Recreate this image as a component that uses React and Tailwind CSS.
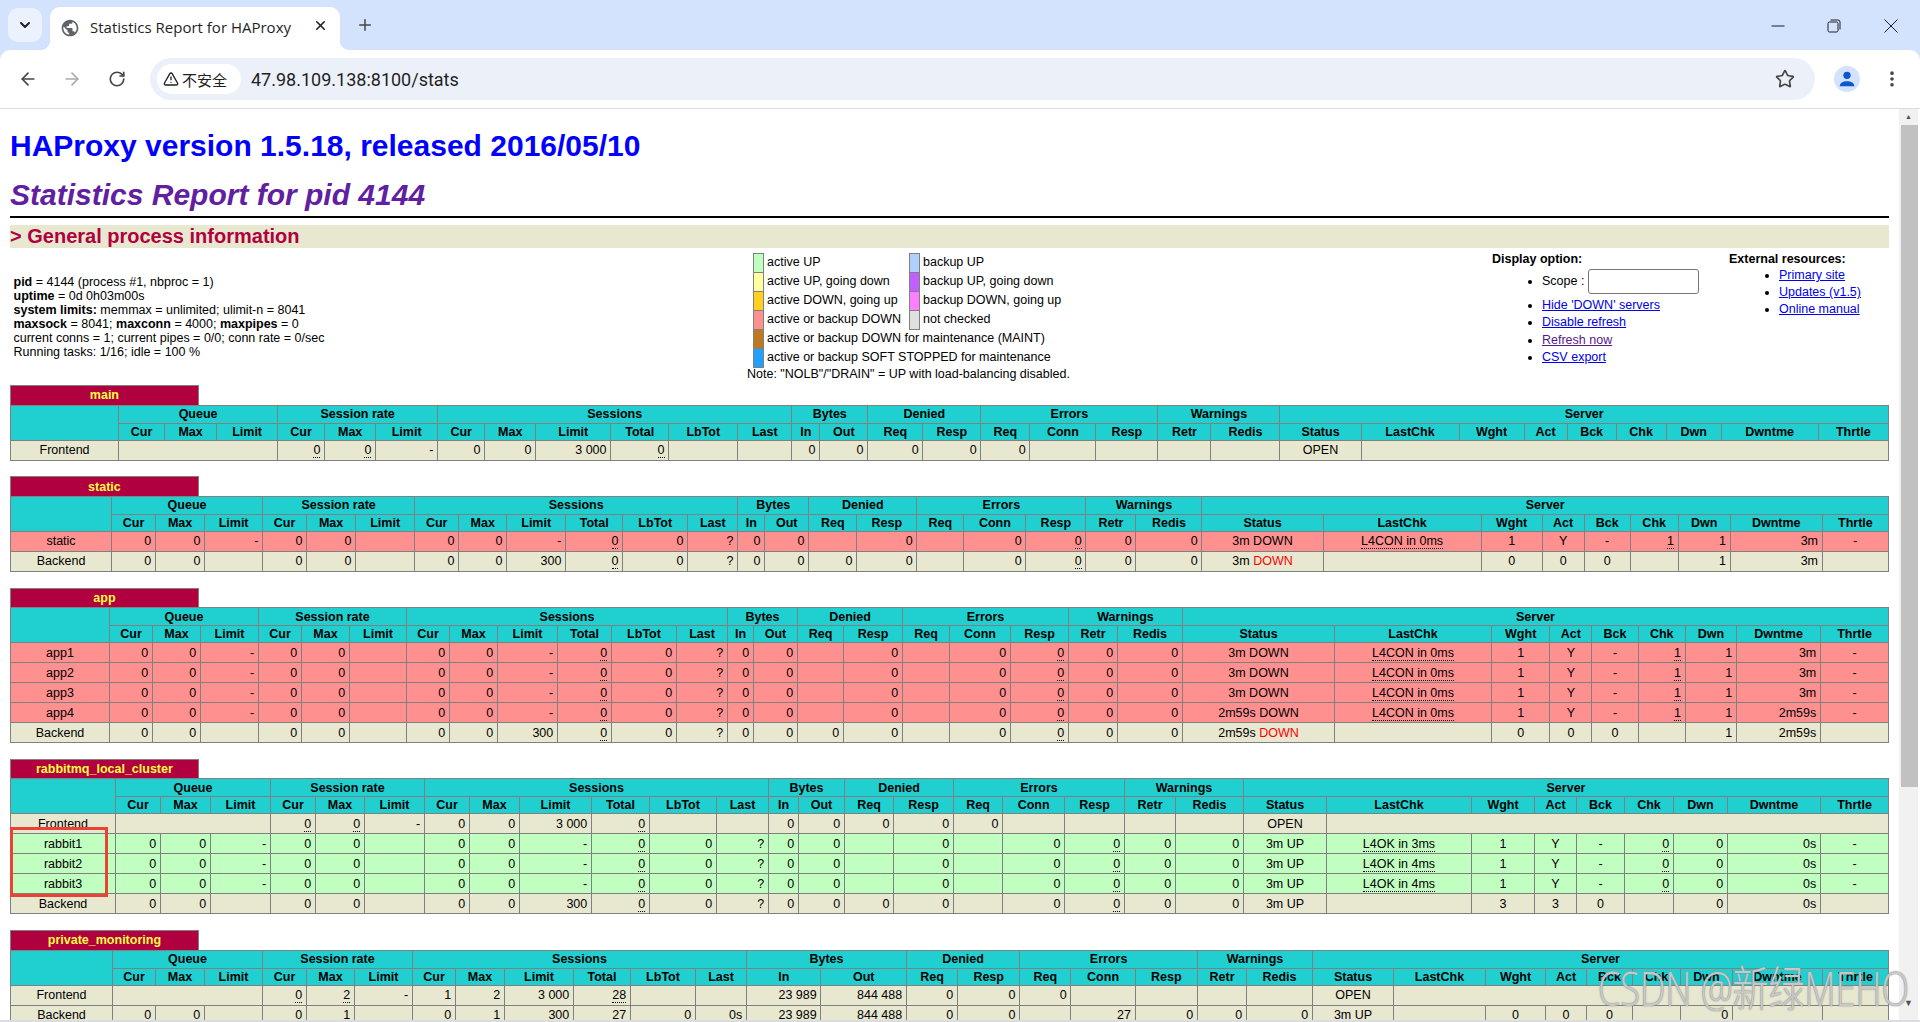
import { ArrowLeft, ArrowRight, ChevronDown, EllipsisVertical, Plus, RotateCw, Star, TriangleAlert, X } from "lucide-react";

const BASE_FONT = "font-['Liberation_Sans',Arial,sans-serif]";
const TD = "border border-[#808080] px-[3.75px] py-[2.5px] text-right whitespace-nowrap";
const TH = "border border-[#808080] font-bold text-center whitespace-nowrap px-[3.75px]";

// small helpers for the cell data
const u = (v) => ({ u: v });
const c = (v) => ({ c: v });
const cu = (v) => ({ cu: v });
const span = (n) => ({ span: n });
const rls = (a, b) => ({ a, b });

function Cell({ cell }) {
  if (cell === "" || cell == null) return <td className={TD}></td>;
  if (typeof cell === "string") return <td className={TD}>{cell}</td>;
  if (cell.span) return <td colSpan={cell.span} className={TD}></td>;
  if (cell.u) return <td className={TD}><span className="border-b border-dotted border-black">{cell.u}</span></td>;
  if (cell.cu) return <td className={`${TD} !text-center`}><span className="border-b border-dotted border-black">{cell.cu}</span></td>;
  if (cell.c) return <td className={`${TD} !text-center`}>{cell.c}</td>;
  if (cell.a) return <td className={TD}>{cell.a.slice(0, -1)}<span className="tracking-[0.2em] mr-px">{cell.a.slice(-1)}</span>{cell.b}</td>;
  if (cell.down) return <td className={`${TD} !text-center`}>{cell.down} <span className="text-[#ff0000]">DOWN</span></td>;
  return <td className={TD}></td>;
}

function ProxyTable({ name, rows, first, cols, last }) {
  const groups = [["Queue", 3], ["Session rate", 3], ["Sessions", 6], ["Bytes", 2], ["Denied", 2], ["Errors", 3], ["Warnings", 2], ["Server", 9]];
  const heads = ["Cur", "Max", "Limit", "Cur", "Max", "Limit", "Cur", "Max", "Limit", "Total", "LbTot", "Last", "In", "Out", "Req", "Resp", "Req", "Conn", "Resp", "Retr", "Redis", "Status", "LastChk", "Wght", "Act", "Bck", "Chk", "Dwn", "Dwntme", "Thrtle"];
  return (
    <div className={last ? "" : "mb-[15.75px]"}>
      <table className="w-full border-collapse">
        <tbody>
          <tr>
            <th className="w-[10%] h-[19px] border border-b-0 border-[#808080] bg-[#b00040] text-[#ffff40] font-bold">{name}</th>
            <th className="w-[90%]"></th>
          </tr>
        </tbody>
      </table>
      <table className="w-full border-collapse">
        <tbody>
          <tr className="bg-[#20d0d0]">
            <th rowSpan={2} className={`${TH} ${first}`}></th>
            {groups.map(([g, n]) => (
              <th key={g} colSpan={n} className={`${TH} h-[18px]`}>{g}</th>
            ))}
          </tr>
          <tr className="bg-[#20d0d0]">
            {heads.map((h, i) => (
              <th key={i} className={`${TH} h-[17px] ${cols[i]}`}>{h}</th>
            ))}
          </tr>
          {rows.map((r) => (
            <tr key={r.name} className={r.bg}>
              <td className={`${TD} !text-center`}>{r.name}</td>
              {r.cells.map((cell, i) => (
                <Cell key={i} cell={cell} />
              ))}
            </tr>
          ))}
        </tbody>
      </table>
    </div>
  );
}

const FE = "bg-[#e8e8d0]";
const DOWN = "bg-[#ff9090]";
const UP = "bg-[#c0ffc0]";

const frontend = (a, b, d, e, t) => ({
  name: "Frontend",
  bg: FE,
  cells: [span(3), a, b, "-", d, e, rls("3", "000"), t, "", "", "0", "0", "0", "0", "0", "", "", "", "", c("OPEN"), span(8)],
});

const downServer = (name, time, chk) => ({
  name,
  bg: DOWN,
  cells: ["0", "0", "-", "0", "0", "", "0", "0", "-", u("0"), "0", "?", "0", "0", "", "0", "", "0", u("0"), "0", "0", c(`${time} DOWN`), cu(chk), c("1"), c("Y"), c("-"), u("1"), "1", time, c("-")],
});

const downBackend = (time) => ({
  name: "Backend",
  bg: FE,
  cells: ["0", "0", "", "0", "0", "", "0", "0", "300", u("0"), "0", "?", "0", "0", "0", "0", "", "0", u("0"), "0", "0", { down: time }, "", c("0"), c("0"), c("0"), "", "1", time, ""],
});

const upServer = (name, chk) => ({
  name,
  bg: UP,
  cells: ["0", "0", "-", "0", "0", "", "0", "0", "-", u("0"), "0", "?", "0", "0", "", "0", "", "0", u("0"), "0", "0", c("3m UP"), cu(chk), c("1"), c("Y"), c("-"), u("0"), "0", "0s", c("-")],
});

const sections = [
  {
    name: "main",
    first: "w-[108px]",
    cols: ["w-[46px]", "w-[52px]", "w-[61px]", "w-[47px]", "w-[51px]", "w-[62px]", "w-[47px]", "w-[51px]", "w-[75px]", "w-[58px]", "w-[69px]", "w-[54px]", "w-[28px]", "w-[48px]", "w-[55px]", "w-[58px]", "w-[49px]", "w-[66px]", "w-[62px]", "w-[53px]", "w-[69px]", "w-[81px]", "w-[98px]", "w-[65px]", "w-[43px]", "w-[49px]", "w-[50px]", "w-[55px]", "w-[97px]", "w-[70px]"],
    rows: [frontend(u("0"), u("0"), "0", "0", u("0"))],
  },
  {
    name: "static",
    first: "w-[101px]",
    cols: ["w-[44px]", "w-[49px]", "w-[58px]", "w-[44px]", "w-[49px]", "w-[59px]", "w-[44px]", "w-[48px]", "w-[59px]", "w-[57px]", "w-[65px]", "w-[50px]", "w-[27px]", "w-[44px]", "w-[48px]", "w-[60px]", "w-[47px]", "w-[62px]", "w-[60px]", "w-[50px]", "w-[66px]", "w-[121px]", "w-[158px]", "w-[61px]", "w-[42px]", "w-[46px]", "w-[48px]", "w-[52px]", "w-[92px]", "w-[66px]"],
    rows: [downServer("static", "3m", "L4CON in 0ms"), downBackend("3m")],
  },
  {
    name: "app",
    first: "w-[99px]",
    cols: ["w-[43px]", "w-[48px]", "w-[58px]", "w-[43px]", "w-[48px]", "w-[57px]", "w-[43px]", "w-[48px]", "w-[60px]", "w-[54px]", "w-[65px]", "w-[51px]", "w-[26px]", "w-[44px]", "w-[46px]", "w-[59px]", "w-[47px]", "w-[61px]", "w-[58px]", "w-[49px]", "w-[65px]", "w-[152px]", "w-[157px]", "", "", "", "", "", "", "w-[68px]"],
    rows: [
      downServer("app1", "3m", "L4CON in 0ms"),
      downServer("app2", "3m", "L4CON in 0ms"),
      downServer("app3", "3m", "L4CON in 0ms"),
      downServer("app4", "2m59s", "L4CON in 0ms"),
      downBackend("2m59s"),
    ],
  },
  {
    name: "rabbitmq_local_cluster",
    first: "w-[105px]",
    cols: ["w-[45px]", "w-[50px]", "w-[60px]", "w-[45px]", "w-[49px]", "w-[60px]", "w-[45px]", "w-[50px]", "w-[72px]", "w-[58px]", "w-[67px]", "w-[52px]", "", "", "", "", "", "", "", "w-[51px]", "w-[68px]", "w-[83px]", "w-[145px]", "w-[63px]", "w-[42px]", "w-[48px]", "w-[49px]", "w-[54px]", "w-[93px]", "w-[68px]"],
    rows: [
      frontend(u("0"), u("0"), "0", "0", u("0")),
      upServer("rabbit1", "L4OK in 3ms"),
      upServer("rabbit2", "L4OK in 4ms"),
      upServer("rabbit3", "L4OK in 4ms"),
      {
        name: "Backend",
        bg: FE,
        cells: ["0", "0", "", "0", "0", "", "0", "0", "300", u("0"), "0", "?", "0", "0", "0", "0", "", "0", u("0"), "0", "0", c("3m UP"), "", c("3"), c("3"), c("0"), "", "0", "0s", ""],
      },
    ],
  },
  {
    name: "private_monitoring",
    first: "w-[102px]",
    cols: ["w-[43px]", "w-[49px]", "w-[58px]", "w-[44px]", "w-[48px]", "w-[58px]", "w-[43px]", "w-[49px]", "w-[69px]", "w-[57px]", "w-[65px]", "w-[51px]", "", "", "", "", "", "", "", "w-[49px]", "w-[66px]", "w-[81px]", "w-[92px]", "w-[60px]", "w-[41px]", "w-[46px]", "w-[48px]", "w-[52px]", "w-[90px]", "w-[66px]"],
    rows: [
      {
        name: "Frontend",
        bg: FE,
        cells: [span(3), u("0"), u("2"), "-", "1", "2", rls("3", "000"), u("28"), "", "", rls("23", "989"), rls("844", "488"), "0", "0", "0", "", "", "", "", c("OPEN"), span(8)],
      },
      {
        name: "Backend",
        bg: FE,
        cells: ["0", "0", "", u("0"), "1", "", "0", "1", "300", u("27"), "0", "0s", rls("23", "989"), rls("844", "488"), "0", "0", "", "27", "0", "0", "0", c("3m UP"), "", c("0"), c("0"), c("0"), "", "0", "", ""],
      },
    ],
  },
];

function Swatch({ color }) {
  return <div className={`w-[11px] h-[20px] shrink-0 border border-[#808080] ${color}`}></div>;
}

function Legend() {
  const pairs = [
    ["bg-[#c0ffc0]", "active UP", "bg-[#b0d0ff]", "backup UP"],
    ["bg-[#ffffa0]", "active UP, going down", "bg-[#c060ff]", "backup UP, going down"],
    ["bg-[#ffd020]", "active DOWN, going up", "bg-[#ff80ff]", "backup DOWN, going up"],
    ["bg-[#ff9090]", "active or backup DOWN", "bg-[#e0e0e0]", "not checked"],
    ["bg-[#c07820]", "active or backup DOWN for maintenance (MAINT)"],
    ["bg-[#20a0ff]", "active or backup SOFT STOPPED for maintenance"],
  ];
  return (
    <div className="w-[745px] pt-[5px]">
      {pairs.map((p) => (
        <div key={p[1]} className="flex h-[19px] ml-[6px] leading-[19px]">
          <Swatch color={p[0]} />
          <span className={`ml-[3px] whitespace-nowrap ${p[2] ? "w-[142px]" : ""}`}>{p[1]}</span>
          {p[2] && <Swatch color={p[2]} />}
          {p[2] && <span className="ml-[3px] whitespace-nowrap">{p[3]}</span>}
        </div>
      ))}
      <div className="leading-[14px]">Note: "NOLB"/"DRAIN" = UP with load-balancing disabled.</div>
    </div>
  );
}

function InfoRow() {
  return (
    <div className="flex h-[137px]">
      <div className="w-[737px] pl-[3.5px] pt-[27px] leading-[14px]">
        <div><b>pid</b> = 4144 (process #1, nbproc = 1)</div>
        <div><b>uptime</b> = 0d 0h03m00s</div>
        <div><b>system limits:</b> memmax = unlimited; ulimit-n = 8041</div>
        <div><b>maxsock</b> = 8041; <b>maxconn</b> = 4000; <b>maxpipes</b> = 0</div>
        <div>current conns = 1; current pipes = 0/0; conn rate = 0/sec</div>
        <div>Running tasks: 1/16; idle = 100 %</div>
      </div>
      <Legend />
      <div className="w-[237px] pt-[4px]">
        <b className="leading-[14px] block font-bold">Display option:</b>
        <ul className="list-disc ml-[50px] mt-[3px] leading-[17px]">
          <li className="h-[26px] leading-[25px]">
            Scope :<input className="ml-[4px] w-[111px] h-[25px] align-top border border-[#767676] rounded-[3px] bg-white" />
          </li>
          <li className="mt-[2px]"><a className="text-[#0000ee] underline" href="#">Hide 'DOWN' servers</a></li>
          <li><a className="text-[#0000ee] underline" href="#">Disable refresh</a></li>
          <li className="mt-[1px]"><a className="text-[#551a8b] underline" href="#">Refresh now</a></li>
          <li><a className="text-[#0000ee] underline" href="#">CSV export</a></li>
        </ul>
      </div>
      <div className="flex-1 pt-[4px]">
        <b className="leading-[14px] block font-bold">External resources:</b>
        <ul className="list-disc ml-[50px] mt-[1px] leading-[17px]">
          <li><a className="text-[#0000ee] underline" href="#">Primary site</a></li>
          <li><a className="text-[#0000ee] underline" href="#">Updates (v1.5)</a></li>
          <li><a className="text-[#0000ee] underline" href="#">Online manual</a></li>
        </ul>
      </div>
    </div>
  );
}

function BrowserChrome() {
  return (
    <div className="h-[109px] shrink-0 bg-[#d3e3fd] font-['Open_Sans',sans-serif] text-[#1f1f1f]">
      <div className="h-[50px] flex items-end">
        <div className="w-[34px] h-[34px] ml-[8px] mb-[8px] rounded-[10px] bg-[#ecf2fd] flex items-center justify-center">
          <ChevronDown size={16} strokeWidth={3} className="text-[#1f1f1f]" />
        </div>
        <div className="relative ml-[8px] w-[290px] h-[43px] bg-white rounded-t-[10px] flex items-center pl-[10px] pb-[2px]">
          <div className="absolute left-[-10px] bottom-0 w-[10px] h-[10px] bg-[radial-gradient(circle_at_0_0,#d3e3fd_10px,#ffffff_10.5px)]"></div>
          <div className="absolute right-[-10px] bottom-0 w-[10px] h-[10px] bg-[radial-gradient(circle_at_100%_0,#d3e3fd_10px,#ffffff_10.5px)]"></div>
          <svg viewBox="0 0 24 24" className="w-[20px] h-[20px] fill-[#5f6368]">
            <path d="M12 2C6.48 2 2 6.48 2 12s4.48 10 10 10 10-4.48 10-10S17.52 2 12 2zm-1 17.93c-3.95-.49-7-3.85-7-7.93 0-.62.08-1.21.21-1.79L9 15v1c0 1.1.9 2 2 2v1.93zm6.9-2.54c-.26-.81-1-1.39-1.9-1.39h-1v-3c0-.55-.45-1-1-1H8v-2h2c.55 0 1-.45 1-1V7h2c1.1 0 2-.9 2-2v-.41c2.93 1.19 5 4.06 5 7.41 0 2.08-.8 3.97-2.1 5.39z" />
          </svg>
          <span className="ml-[10px] text-[15px] whitespace-nowrap">Statistics Report for HAProxy</span>
          <X size={15} strokeWidth={2.5} className="absolute left-[263px] top-[11px]" />
        </div>
        <Plus size={18} strokeWidth={2} className="ml-[16px] mb-[16px] text-[#444746]" />
        <div className="ml-auto flex items-center mb-[17px] text-[#1f1f1f]">
          <svg viewBox="0 0 14 14" className="w-[14px] h-[14px] stroke-current fill-none"><path d="M0.5 7h13" /></svg>
          <svg viewBox="0 0 14 14" className="ml-[42px] w-[14px] h-[14px] stroke-current fill-none">
            <rect x="1" y="3" width="10" height="10" rx="1.5" />
            <path d="M3.5 1h7.5a2 2 0 0 1 2 2v7.5" />
          </svg>
          <svg viewBox="0 0 14 14" className="ml-[43px] mr-[22px] w-[14px] h-[14px] stroke-current fill-none"><path d="M0.5 0.5l13 13M13.5 0.5l-13 13" /></svg>
        </div>
      </div>
      <div className="h-[59px] bg-white rounded-t-[10px] border-b border-[#dadce0] flex items-center">
        <ArrowLeft size={20} strokeWidth={2} className="ml-[18px] text-[#444746]" />
        <ArrowRight size={20} strokeWidth={2} className="ml-[24px] text-[#a8abaf]" />
        <RotateCw size={18} strokeWidth={2.2} className="ml-[26px] text-[#444746]" />
        <div className="ml-[24px] w-[1665px] h-[42px] rounded-full bg-[#ecf1f9] flex items-center pl-[7px]">
          <div className="h-[30px] w-[84px] rounded-full bg-white flex items-center pl-[6px]">
            <TriangleAlert size={16} strokeWidth={2} className="text-[#1f1f1f]" />
            <span className="ml-[3px] text-[15px] font-['Noto_Sans_CJK_SC',sans-serif] leading-none whitespace-nowrap">不安全</span>
          </div>
          <span className="ml-[10px] text-[18px] font-['Roboto',sans-serif]">47.98.109.138:8100/stats</span>
          <Star size={20} strokeWidth={2} className="ml-auto mr-[20px] text-[#444746]" />
        </div>
        <div className="ml-[19px] w-[26px] h-[26px] rounded-full bg-[#d3e3fd] flex items-center justify-center">
          <svg viewBox="0 0 24 24" className="w-[22px] h-[22px] fill-[#0b57d0]">
            <circle cx="12" cy="8" r="4" />
            <path d="M4 20c0-3.5 3.6-5.5 8-5.5s8 2 8 5.5z" />
          </svg>
        </div>
        <EllipsisVertical size={20} strokeWidth={2.4} className="ml-[22px] text-[#444746]" />
      </div>
    </div>
  );
}

function Scrollbar() {
  return (
    <div className="w-[21px] shrink-0 bg-white pr-[2px]">
      <div className="h-full bg-[#f1f1f1] flex flex-col items-center">
        <div className="h-[16px] flex items-center justify-center text-[7px] text-[#505050]">▲</div>
        <div className="w-[17px] self-end h-[662px] bg-[#c1c1c1]"></div>
        <div className="mt-auto h-[22px] flex items-start justify-center text-[9px] leading-[10px] text-[#505050]">▼</div>
      </div>
    </div>
  );
}

export default function App() {
  return (
    <div className={`relative h-[1022px] w-full overflow-hidden flex flex-col bg-white text-black ${BASE_FONT}`}>
      <BrowserChrome />
      <div className="flex flex-1 min-h-0">
        <div className="flex-1 min-w-0 overflow-hidden px-[10px] pt-[19px] text-[12.5px] leading-[14px]">
          <h1 className="text-[30px] leading-[36px] font-bold text-[#0000ff] whitespace-nowrap">HAProxy version 1.5.18, released 2016/05/10</h1>
          <h2 className="mt-[13px] text-[30px] leading-[36px] font-bold italic text-[#6020a0] whitespace-nowrap">Statistics Report for pid 4144</h2>
          <div className="mt-[3px] h-[2px] bg-black"></div>
          <h3 className="mt-[7px] h-[23px] leading-[23px] text-[20px] font-bold text-[#b00040] bg-[#e8e8d0]">&gt; General process information</h3>
          <InfoRow />
          {sections.map((s, i) => (
            <ProxyTable key={s.name} name={s.name} rows={s.rows} first={s.first} cols={s.cols} last={i === sections.length - 1} />
          ))}
        </div>
        <Scrollbar />
      </div>
      <div className="h-[2px] shrink-0 bg-[#dadce0]"></div>
      {/* red marker box drawn over the rabbit rows */}
      <div className="absolute left-[10px] top-[827px] w-[98px] h-[70px] border-[3px] border-[#ea4335]"></div>
      {/* csdn watermark */}
      <div className="absolute left-[1598px] top-[964px] origin-left scale-x-75 text-[48px] leading-[48px] font-light whitespace-nowrap text-white/60 font-['Open_Sans','Noto_Sans_CJK_SC',sans-serif] [text-shadow:0_0_1px_#777777,0_0_2px_#999999]">CSDN @新绿MEHO</div>
    </div>
  );
}
